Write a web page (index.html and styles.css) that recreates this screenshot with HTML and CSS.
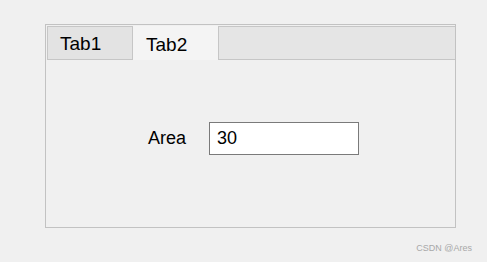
FILE: index.html
```html
<!DOCTYPE html>
<html>
<head>
<meta charset="utf-8">
<link rel="stylesheet" href="styles.css">
</head>
<body>
<div class="page">
  <div class="panel">
    <div class="tabs">
      <div class="tab">Tab1</div>
      <div class="tab selected">Tab2</div>
      <div class="tab-fill"></div>
    </div>
    <div class="content">
      <span class="label">Area</span>
      <div class="field">30</div>
    </div>
  </div>
  <div class="watermark">CSDN @Ares</div>
</div>
</body>
</html>
```
FILE: styles.css
```css
html, body {
  margin: 0;
  padding: 0;
  background: #f0f0f0;
}
.page {
  width: 487px;
  height: 262px;
  padding: 24px 0 0 45px;
  box-sizing: border-box;
  font-family: "Liberation Sans", Arial, sans-serif;
  color: #000;
}
.panel {
  width: 411px;
  height: 204px;
  box-sizing: border-box;
  border: 1px solid #c2c2c2;
  padding: 1px 0 0 1px;
  display: flex;
  flex-direction: column;
}
.tabs {
  display: flex;
  height: 34px;
}
.tab {
  width: 86px;
  box-sizing: border-box;
  border: 1px solid #c6c6c6;
  background: #e3e3e3;
  font-size: 19px;
  display: flex;
  align-items: center;
  padding: 2px 0 0 12px;
}
.tab.selected {
  width: 85px;
  border: none;
  background: #f4f4f4;
  padding: 3px 0 0 13px;
}
.tab-fill {
  flex: 1;
  border-top: 1px solid #c6c6c6;
  border-left: 1px solid #c6c6c6;
  border-bottom: 1px solid #c6c6c6;
  background: #e5e5e5;
}
.content {
  display: flex;
  align-items: center;
  gap: 23px;
  padding: 62px 0 0 101px;
}
.label {
  font-size: 18px;
}
.field {
  width: 150px;
  height: 33px;
  box-sizing: border-box;
  border: 1px solid #7a7a7a;
  background: #fff;
  font-size: 18px;
  padding: 0 0 0 7px;
  display: flex;
  align-items: center;
}
.watermark {
  width: 427px;
  text-align: right;
  font-size: 9px;
  color: #a8a8a8;
  margin-top: 15px;
}
```
